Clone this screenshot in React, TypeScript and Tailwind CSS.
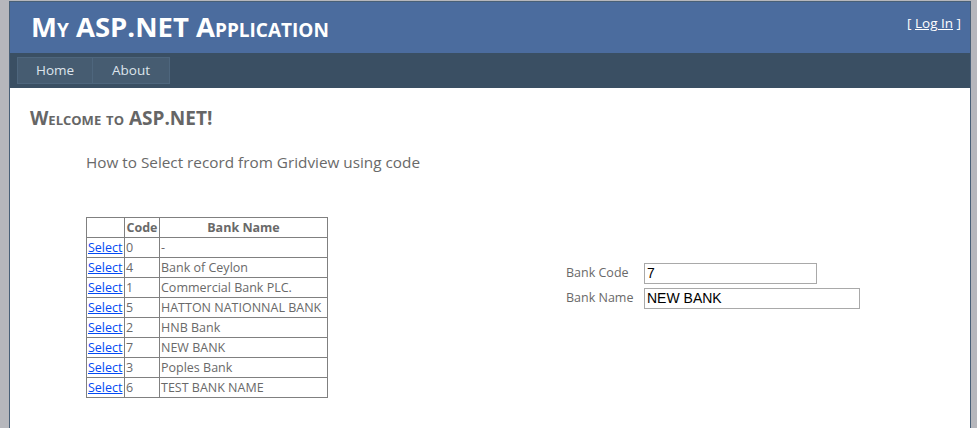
const banks = [
  { code: "0", name: "-" },
  { code: "4", name: "Bank of Ceylon" },
  { code: "1", name: "Commercial Bank PLC." },
  { code: "5", name: "HATTON NATIONNAL BANK" },
  { code: "2", name: "HNB Bank" },
  { code: "7", name: "NEW BANK" },
  { code: "3", name: "Poples Bank" },
  { code: "6", name: "TEST BANK NAME" },
];

export default function App() {
  return (
    <div className="h-[428px] overflow-hidden bg-[#b6b7bc] pl-[9px] pt-px text-[#696969] font-['Open_Sans',sans-serif]">
      <div className="h-[440px] w-[962px] border border-[#496077] bg-white">
        {/* header */}
        <div className="flex h-[51px] items-start justify-between bg-[#4b6c9e]">
          <h1 className="pl-[21px] pt-[8px] text-[27.5px] font-bold leading-[34px] text-white [font-variant:small-caps]">
            My ASP.NET Application
          </h1>
          <div className="pr-[9px] pt-[11px] text-[13.5px] text-white">
            [ <a href="#" className="underline">Log In</a> ]
          </div>
        </div>

        {/* menu */}
        <div className="flex h-[35px] items-start bg-[#3a4f63] pl-[7px] pt-[4px]">
          <a href="#" className="flex h-[27px] w-[76px] items-center justify-center border border-[#4e667d] bg-[#465c71] text-[13.5px] text-[#dde4ec]">
            Home
          </a>
          <a href="#" className="flex h-[27px] w-[77px] items-center justify-center border border-l-0 border-[#4e667d] bg-[#465c71] text-[13.5px] text-[#dde4ec]">
            About
          </a>
        </div>

        {/* main */}
        <div className="pl-[20px] pt-[17px]">
          <h2 className="text-[19px] font-bold leading-[26px] text-[#666666] [font-variant:small-caps]">
            Welcome to ASP.NET!
          </h2>
          <p className="pl-[56px] pt-[20px] text-[15.3px] leading-[22px]">
            How to Select record from Gridview using code
          </p>

          <div className="flex pt-[44px] pl-[56px]">
            <table className="border-collapse border border-[#808080] text-[12.5px] leading-[19px]">
              <thead>
                <tr>
                  <th className="w-[38px] border border-[#808080]"></th>
                  <th className="w-[35px] border border-[#808080] px-px font-bold">Code</th>
                  <th className="w-[168px] border border-[#808080] font-bold">Bank Name</th>
                </tr>
              </thead>
              <tbody>
                {banks.map((b) => (
                  <tr key={b.code}>
                    <td className="border border-[#808080] px-px">
                      <a href="#" className="text-[#034af3] underline">Select</a>
                    </td>
                    <td className="border border-[#808080] px-px">{b.code}</td>
                    <td className="border border-[#808080] px-px whitespace-nowrap">{b.name}</td>
                  </tr>
                ))}
              </tbody>
            </table>

            <div className="ml-[238px] mt-[46px] flex flex-col gap-[4px] text-[12.5px]">
              <div className="flex items-center">
                <span className="w-[78px]">Bank Code</span>
                <input
                  readOnly
                  value="7"
                  className="h-[21px] w-[173px] border border-[#a9a9a9] px-[2px] text-[14px] text-black font-['Liberation_Sans',sans-serif] outline-none"
                />
              </div>
              <div className="flex items-center">
                <span className="w-[78px]">Bank Name</span>
                <input
                  readOnly
                  value="NEW BANK"
                  className="h-[21px] w-[216px] border border-[#a9a9a9] px-[2px] text-[14px] text-black font-['Liberation_Sans',sans-serif] outline-none"
                />
              </div>
            </div>
          </div>
        </div>
      </div>
    </div>
  );
}
